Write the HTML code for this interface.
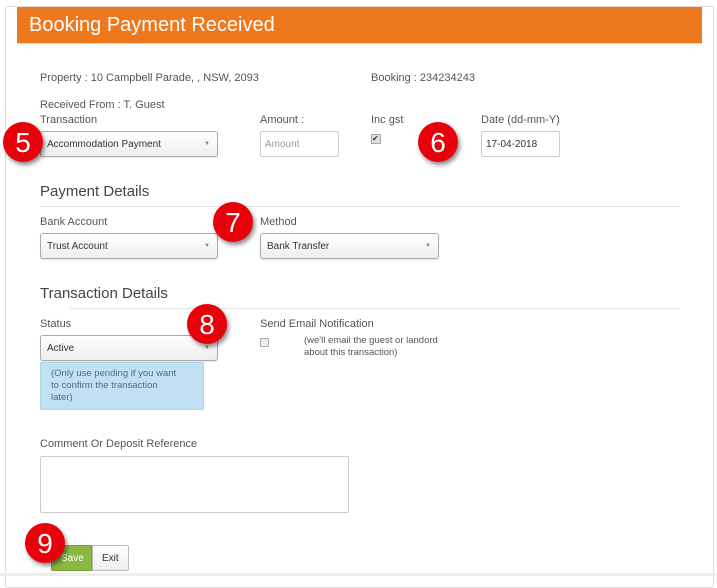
<!DOCTYPE html><html><head><style>
body{margin:0;width:717px;height:576px;background:#fff;position:relative;overflow:hidden;font-family:"Liberation Sans",sans-serif;color:#555}
.a{position:absolute}
.t{position:absolute;font-size:11px;white-space:nowrap}
.sel{position:absolute;height:26px;border:1px solid #aaa;border-radius:3px;background:linear-gradient(#fff,#eee);font-size:10px;color:#333;box-sizing:border-box;padding:7px 6px;box-shadow:0 1px 1px rgba(0,0,0,.1)}
.sel:after{content:"▼";position:absolute;right:7px;top:9px;font-size:6px;color:#888}
.inp{position:absolute;height:26px;border:1px solid #ccc;border-radius:2px;box-sizing:border-box;font-size:10px;padding:7px 4px}
.c{position:absolute;width:40px;height:40px;border-radius:50%;background:#e8000b;color:#fff;font-size:28px;text-align:center;line-height:42px;box-shadow:2px 3px 4px rgba(0,0,0,.45)}
.h{position:absolute;font-size:15px;color:#444}
.hr{position:absolute;height:1px;background:#e3e3e3}
</style></head><body>
<div class="a" style="left:5px;top:6px;width:707px;height:580px;border:1px solid #ddd;border-radius:3px"></div>
<div class="a" style="left:17px;top:7px;width:685px;height:36px;background:#ee781d;border-bottom:1px solid #bfe4e8"></div>
<div class="a" style="left:29px;top:14px;font-size:20px;color:#fff">Booking Payment Received</div>
<div class="t" style="left:40px;top:72px">Property : 10 Campbell Parade, , NSW, 2093</div>
<div class="t" style="left:371px;top:72px">Booking : 234234243</div>
<div class="t" style="left:40px;top:99px">Received From : T. Guest</div>
<div class="t" style="left:40px;top:114px">Transaction</div>
<div class="t" style="left:260px;top:114px">Amount :</div>
<div class="t" style="left:371px;top:114px">Inc gst</div>
<div class="t" style="left:481px;top:114px">Date (dd-mm-Y)</div>
<div class="sel" style="left:40px;top:131px;width:178px">Accommodation Payment</div>
<div class="inp" style="left:260px;top:131px;width:79px;color:#999">Amount</div>
<div class="a" style="left:371px;top:134px;width:8px;height:8px;border:1px solid #aaa;background:#ddd;font-size:8px;line-height:8px;color:#333">✔</div>
<div class="inp" style="left:481px;top:131px;width:79px;color:#333">17-04-2018</div>
<div class="h" style="left:40px;top:183px">Payment Details</div>
<div class="hr" style="left:40px;top:206px;width:639px"></div>
<div class="t" style="left:40px;top:216px">Bank Account</div>
<div class="t" style="left:260px;top:216px">Method</div>
<div class="sel" style="left:40px;top:233px;width:178px">Trust Account</div>
<div class="sel" style="left:260px;top:233px;width:179px">Bank Transfer</div>
<div class="h" style="left:40px;top:285px">Transaction Details</div>
<div class="hr" style="left:70px;top:308px;width:609px"></div>
<div class="t" style="left:40px;top:318px">Status</div>
<div class="t" style="left:260px;top:318px">Send Email Notification</div>
<div class="sel" style="left:40px;top:335px;width:178px">Active</div>
<div class="a" style="left:260px;top:338px;width:7px;height:7px;border:1px solid #aaa;background:#eee;border-radius:1px"></div>
<div class="t" style="left:304px;top:335px;font-size:9.5px;line-height:12px">(we'll email the guest or landord<br>about this transaction)</div>
<div class="a" style="left:40px;top:362px;width:164px;height:48px;background:#bfe1f2;border:1px solid #a8d6ec;border-radius:2px;box-sizing:border-box;padding:5px 10px;font-size:9.5px;line-height:12px;color:#4a6e86">(Only use pending if you want<br>to confirm the transaction<br>later)</div>
<div class="t" style="left:40px;top:438px">Comment Or Deposit Reference</div>
<div class="a" style="left:40px;top:456px;width:307px;height:55px;border:1px solid #ccc;border-radius:2px"></div>
<div class="a" style="left:51px;top:545px;width:41px;height:26px;background:#8ab842;border:1px solid #77a334;box-sizing:border-box;font-size:10px;color:#fff;padding:7px 0 0 9px;border-radius:2px 0 0 2px">Save</div>
<div class="a" style="left:92px;top:545px;width:37px;height:26px;background:linear-gradient(#fff,#eee);border:1px solid #bbb;box-sizing:border-box;font-size:10px;color:#333;padding:7px 0 0 9px;border-radius:0 2px 2px 0">Exit</div>
<div class="a" style="left:0;top:573px;width:717px;height:3px;background:#eee"></div>
<div class="c" style="left:3px;top:122px">5</div>
<div class="c" style="left:418px;top:122px">6</div>
<div class="c" style="left:213px;top:202px">7</div>
<div class="c" style="left:187px;top:304px">8</div>
<div class="c" style="left:25px;top:523px">9</div>
</body></html>
